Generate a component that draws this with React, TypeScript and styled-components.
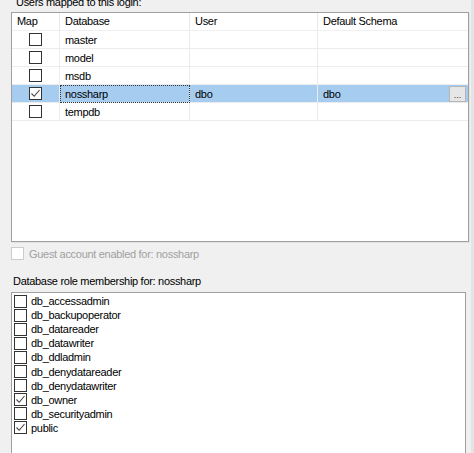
import styled, { createGlobalStyle } from "styled-components";

const GlobalStyle = createGlobalStyle`
  html, body {
    margin: 0;
    padding: 0;
    background: #f0f0f0;
  }
`;

const databases = [
  { name: "master", mapped: false, user: "", schema: "" },
  { name: "model", mapped: false, user: "", schema: "" },
  { name: "msdb", mapped: false, user: "", schema: "" },
  { name: "nossharp", mapped: true, user: "dbo", schema: "dbo", selected: true },
  { name: "tempdb", mapped: false, user: "", schema: "" },
];

const roles = [
  { name: "db_accessadmin", checked: false },
  { name: "db_backupoperator", checked: false },
  { name: "db_datareader", checked: false },
  { name: "db_datawriter", checked: false },
  { name: "db_ddladmin", checked: false },
  { name: "db_denydatareader", checked: false },
  { name: "db_denydatawriter", checked: false },
  { name: "db_owner", checked: true },
  { name: "db_securityadmin", checked: false },
  { name: "public", checked: true },
];

const Check = ({ checked, disabled }: { checked?: boolean; disabled?: boolean }) => (
  <Box $disabled={disabled}>
    {checked && (
      <svg width="11" height="11" viewBox="0 0 11 11">
        <path d="M1.5 5.5 L4.2 8.3 L9.5 2" fill="none" stroke="#444" strokeWidth="1.1" />
      </svg>
    )}
  </Box>
);

export default function App() {
  return (
    <>
      <GlobalStyle />
      <Page>
        <TopLabel>Users mapped to this login:</TopLabel>
        <GridPanel>
          <HeaderCell>Map</HeaderCell>
          <HeaderCell>Database</HeaderCell>
          <HeaderCell>User</HeaderCell>
          <HeaderCell $last>Default Schema</HeaderCell>
          {databases.map((db) => (
            <Row key={db.name} $selected={db.selected}>
              <Cell $center>
                <Check checked={db.mapped} />
              </Cell>
              <Cell $focus={db.selected}>{db.name}</Cell>
              <Cell>{db.user}</Cell>
              <Cell $last>
                {db.schema}
                {db.selected && <Ellipsis>...</Ellipsis>}
              </Cell>
            </Row>
          ))}
        </GridPanel>
        <GuestRow>
          <Check disabled />
          <span>Guest account enabled for: nossharp</span>
        </GuestRow>
        <SectionLabel>Database role membership for: nossharp</SectionLabel>
        <RoleList>
          {roles.map((r) => (
            <RoleItem key={r.name}>
              <Check checked={r.checked} />
              <span>{r.name}</span>
            </RoleItem>
          ))}
        </RoleList>
      </Page>
    </>
  );
}

const Page = styled.div`
  width: 474px;
  height: 453px;
  overflow: hidden;
  background: #f0f0f0;
  font-family: "Liberation Sans", Arial, sans-serif;
  font-size: 11px;
  letter-spacing: -0.3px;
  color: #000;
  border-right: 3px solid #e4e4e4;
  box-sizing: border-box;
`;

const TopLabel = styled.div`
  margin-top: -5px;
  padding-left: 16px;
  height: 17px;
  line-height: 14px;
`;

const GridPanel = styled.div`
  margin-left: 11px;
  width: 458px;
  height: 230px;
  box-sizing: border-box;
  background: #fff;
  border: 1px solid #a0a0a0;
  box-shadow: 1px 1px 0 #e3e3e3;
  display: grid;
  grid-template-columns: 48px 130px 128px 1fr;
  grid-auto-rows: 18px;
  align-content: start;
`;

const HeaderCell = styled.div<{ $last?: boolean }>`
  padding-left: 5px;
  line-height: 17px;
  border-right: ${(p) => (p.$last ? "none" : "1px solid #e8e8e8")};
  border-bottom: 1px solid #f0f0f0;
  white-space: nowrap;
`;

const Row = styled.div<{ $selected?: boolean }>`
  display: contents;
  & > div {
    background: ${(p) => (p.$selected ? "#a6cdf0" : "#fff")};
  }
`;

const Cell = styled.div<{ $center?: boolean; $last?: boolean; $focus?: boolean }>`
  position: relative;
  display: flex;
  align-items: center;
  justify-content: ${(p) => (p.$center ? "center" : "flex-start")};
  padding-left: ${(p) => (p.$center ? "0" : "5px")};
  box-sizing: border-box;
  border-right: ${(p) => (p.$last ? "none" : "1px solid #ececec")};
  border-bottom: 1px solid #ececec;
  outline: ${(p) => (p.$focus ? "1px dotted #333" : "none")};
  outline-offset: -1px;
  white-space: nowrap;
`;

const Ellipsis = styled.div`
  position: absolute;
  right: 2px;
  top: 1px;
  width: 15px;
  height: 14px;
  border: 1px solid #b5b5b5;
  background: #e6e6e6;
  font-size: 9px;
  line-height: 16px;
  text-align: center;
  letter-spacing: 0;
  color: #333;
`;

const Box = styled.span<{ $disabled?: boolean }>`
  display: inline-flex;
  align-items: center;
  justify-content: center;
  width: 11px;
  height: 11px;
  border: 1px solid ${(p) => (p.$disabled ? "#cccccc" : "#333")};
  background: #fff;
  flex: none;
`;

const GuestRow = styled.div`
  margin: 5px 0 0 11px;
  height: 13px;
  display: flex;
  align-items: center;
  gap: 5px;
  color: #a0a0a0;
`;

const SectionLabel = styled.div`
  margin: 14px 0 0 13px;
  height: 15px;
  line-height: 15px;
`;

const RoleList = styled.div`
  margin: 3px 0 0 11px;
  width: 455px;
  height: 200px;
  box-sizing: border-box;
  background: #fff;
  border: 1px solid #a0a0a0;
  padding: 1px 0 0 2px;
`;

const RoleItem = styled.div`
  height: 14.1px;
  display: flex;
  align-items: center;
  gap: 4px;
  line-height: 14px;
`;
